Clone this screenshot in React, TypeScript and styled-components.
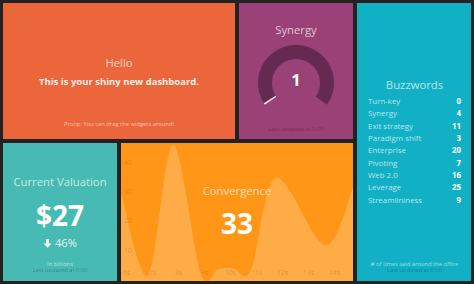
import React from "react"
import styled, { createGlobalStyle } from "styled-components"

const GlobalStyle = createGlobalStyle`
  html, body {
    margin: 0;
    padding: 0;
    background: #222222;
  }
  body {
    font-family: "Open Sans", "DejaVu Sans", sans-serif;
    color: #ffffff;
  }
`

const Board = styled.div`
  display: grid;
  grid-template-columns: repeat(4, 114px);
  grid-template-rows: 136px 138px;
  gap: 4px;
  padding: 3px;
  width: 474px;
  height: 284px;
  box-sizing: border-box;
`

interface WidgetProps {
  $bg: string
  $top: number
  $bottom: number
}

const Widget = styled.section<WidgetProps>`
  position: relative;
  display: flex;
  flex-direction: column;
  align-items: center;
  box-sizing: border-box;
  overflow: hidden;
  background: ${p => p.$bg};
  padding: ${p => p.$top}px 0 ${p => p.$bottom}px;
  text-align: center;
`

const HelloWidget = styled(Widget)`
  grid-column: 1 / span 2;
`

const BuzzWidget = styled(Widget)`
  grid-column: 4;
  grid-row: 1 / span 2;
  align-items: stretch;
  padding-left: 11px;
  padding-right: 10px;
`

const GraphWidget = styled(Widget)`
  grid-column: 2 / span 2;
`

const Title = styled.h1`
  margin: 0;
  font-size: 11.3px;
  line-height: 14px;
  font-weight: 400;
  color: rgba(255, 255, 255, 0.7);
  position: relative;
`

const Lead = styled.h3`
  margin: 6px 0 0;
  font-size: 9.5px;
  line-height: 12px;
  font-weight: 700;
  color: rgba(255, 255, 255, 0.92);
`

const BigNumber = styled.h2<{ $gap: number }>`
  margin: ${p => p.$gap}px 0 0;
  font-size: 28px;
  line-height: 30px;
  font-weight: 700;
  color: #ffffff;
  position: relative;
`

const Change = styled.p`
  margin: 6px 0 0;
  display: flex;
  align-items: center;
  gap: 3px;
  font-size: 11.2px;
  line-height: 14px;
  color: rgba(255, 255, 255, 0.85);
`

const Footer = styled.footer`
  margin-top: auto;
  display: flex;
  flex-direction: column;
  align-items: center;
  font-size: 5.8px;
  line-height: 6.7px;
  position: relative;
`

const MoreInfo = styled.span`
  color: rgba(255, 255, 255, 0.6);
`

const UpdatedAt = styled.span`
  color: rgba(0, 0, 0, 0.3);
`

const GaugeWrap = styled.div`
  position: relative;
  width: 84px;
  height: 70px;
  margin-top: 4px;
`

const GaugeValue = styled.span`
  position: absolute;
  left: 0;
  right: 0;
  top: 30px;
  font-size: 16.5px;
  line-height: 18px;
  font-weight: 700;
  color: #ffffff;
`

const List = styled.ul`
  list-style: none;
  margin: 3px 0 0;
  padding: 0;
`

const ListRow = styled.li`
  display: flex;
  justify-content: space-between;
  font-size: 7.9px;
  line-height: 12.35px;
`

const Label = styled.span`
  color: rgba(255, 255, 255, 0.7);
`

const Value = styled.span`
  font-weight: 700;
  color: #ffffff;
`

const Chart = styled.svg`
  position: absolute;
  inset: 0;
`

const AxisText = styled.text`
  font-family: "Open Sans", sans-serif;
  font-size: 6.8px;
  fill: rgba(0, 0, 0, 0.17);
`

const buzzwords: [string, number][] = [
  ["Turn-key", 0],
  ["Synergy", 4],
  ["Exit strategy", 11],
  ["Paradigm shift", 3],
  ["Enterprise", 20],
  ["Pivoting", 7],
  ["Web 2.0", 16],
  ["Leverage", 25],
  ["Streamlininess", 9],
]

// points in panel coordinates (232 x 138)
const graphPoints = [
  [0, 50], [27, 132], [52, 2], [80, 131], [97, 126], [112, 125],
  [130, 127], [155, 35], [204, 102], [232, 45],
]

const smoothPath = (pts: number[][]) => {
  let d = `M${pts[0][0]},${pts[0][1]}`
  for (let i = 0; i < pts.length - 1; i++) {
    const p0 = pts[i - 1] || pts[i]
    const p1 = pts[i]
    const p2 = pts[i + 1]
    const p3 = pts[i + 2] || p2
    const c1 = [p1[0] + (p2[0] - p0[0]) / 6, p1[1] + (p2[1] - p0[1]) / 6]
    const c2 = [p2[0] - (p3[0] - p1[0]) / 6, p2[1] - (p3[1] - p1[1]) / 6]
    d += ` C${c1} ${c2} ${p2}`
  }
  return d
}

const polar = (cx: number, cy: number, r: number, deg: number) => {
  const a = (deg * Math.PI) / 180
  return `${(cx + r * Math.sin(a)).toFixed(2)},${(cy - r * Math.cos(a)).toFixed(2)}`
}

const arc = (r: number, from: number, to: number) => {
  const large = to - from > 180 ? 1 : 0
  return `M${polar(42, 42, r, from)} A${r},${r} 0 ${large} 1 ${polar(42, 42, r, to)}`
}

const Gauge = ({ value }: { value: number }) => (
  <GaugeWrap>
    <svg width="84" height="70" viewBox="0 0 84 70">
      <path d={arc(31, -125, 125)} fill="none" stroke="#652a51" strokeWidth="14" />
      <path d={arc(31, -125, -125 + (250 * value) / 100 + 0.5)} fill="none" stroke="#f6e6f0" strokeWidth="14" />
    </svg>
    <GaugeValue>{value}</GaugeValue>
  </GaugeWrap>
)

const ArrowDown = () => (
  <svg width="9" height="9" viewBox="0 0 9 9">
    <path d="M3.1 0 H5.9 V4.4 H8.6 L4.5 8.8 L0.4 4.4 H3.1 Z" fill="rgba(255,255,255,0.9)" />
  </svg>
)

const ConvergenceChart = () => {
  const line = smoothPath(graphPoints)
  return (
    <Chart width="232" height="138" viewBox="0 0 232 138">
      <path d={`${line} L232,138 L0,138 Z`} fill="rgba(255,255,255,0.2)" />
      {[40, 30, 20, 10].map((v, i) => (
        <AxisText key={v} x="3" y={21.5 + i * 29.4}>{v}</AxisText>
      ))}
      {["6s", "7s", "8s", "9s", "10s", "11s", "12s", "13s", "14s"].map((t, i) => (
        <AxisText key={t} x={5.5 + i * 26} y="131.5" textAnchor="middle">{t}</AxisText>
      ))}
    </Chart>
  )
}

export default function App() {
  return (
    <>
      <GlobalStyle />
      <Board>
        <HelloWidget $bg="#ec663c" $top={53} $bottom={11}>
          <Title>Hello</Title>
          <Lead>This is your shiny new dashboard.</Lead>
          <Footer>
            <MoreInfo>Protip: You can drag the widgets around!</MoreInfo>
          </Footer>
        </HelloWidget>

        <Widget $bg="#9a4177" $top={20} $bottom={6}>
          <Title>Synergy</Title>
          <Gauge value={1} />
          <Footer>
            <UpdatedAt>Last updated at 0:00</UpdatedAt>
          </Footer>
        </Widget>

        <BuzzWidget $bg="#12b0c5" $top={75} $bottom={7}>
          <Title>Buzzwords</Title>
          <List>
            {buzzwords.map(([label, count]) => (
              <ListRow key={label}>
                <Label>{label}</Label>
                <Value>{count}</Value>
              </ListRow>
            ))}
          </List>
          <Footer>
            <MoreInfo># of times said around the office</MoreInfo>
            <UpdatedAt>Last updated at 0:00</UpdatedAt>
          </Footer>
        </BuzzWidget>

        <Widget $bg="#47bbb3" $top={32} $bottom={7}>
          <Title>Current Valuation</Title>
          <BigNumber $gap={11}>$27</BigNumber>
          <Change>
            <ArrowDown />
            46%
          </Change>
          <Footer>
            <MoreInfo>In billions</MoreInfo>
            <UpdatedAt>Last updated at 0:00</UpdatedAt>
          </Footer>
        </Widget>

        <GraphWidget $bg="#ff9618" $top={41} $bottom={0}>
          <ConvergenceChart />
          <Title>Convergence</Title>
          <BigNumber $gap={10}>33</BigNumber>
        </GraphWidget>
      </Board>
    </>
  )
}
